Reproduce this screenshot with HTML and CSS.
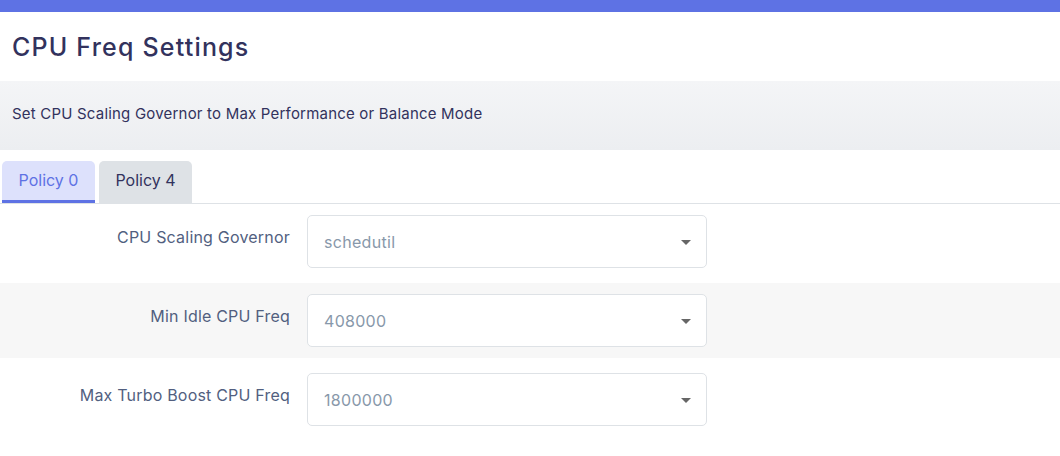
FILE: index.html
```html
<!DOCTYPE html>
<html>
<head>
<meta charset="utf-8">
<link rel="stylesheet" href="styles.css">
</head>
<body>
<div class="topbar"></div>
<header class="header"><h1 class="title">CPU Freq Settings</h1></header>
<div class="desc">Set CPU Scaling Governor to Max Performance or Balance Mode</div>
<nav class="tabs">
  <div class="tab active">Policy 0</div>
  <div class="tab">Policy 4</div>
</nav>
<div class="rows">
  <div class="row">
    <div class="label">CPU Scaling Governor</div>
    <div class="select"><span>schedutil</span><span class="caret"></span></div>
  </div>
  <div class="row alt">
    <div class="label">Min Idle CPU Freq</div>
    <div class="select"><span>408000</span><span class="caret"></span></div>
  </div>
  <div class="row">
    <div class="label">Max Turbo Boost CPU Freq</div>
    <div class="select"><span>1800000</span><span class="caret"></span></div>
  </div>
</div>
</body>
</html>
```
FILE: styles.css
```css
html, body { margin: 0; padding: 0; background: #fff; }
body { font-family: Inter, "Noto Sans", sans-serif; color: #32325d; }
.topbar { height: 12px; background: #5e72e4; }
.header { height: 69px; display: flex; align-items: center; padding-left: 12px; box-sizing: border-box; }
.title { margin: 0; font-size: 25px; font-weight: 500; letter-spacing: 1.2px; color: #32325d; }
.desc { height: 69px; box-sizing: border-box; display: flex; align-items: center; padding: 0 0 4px 12px;
  background: linear-gradient(#f4f5f7, #eceef1); font-size: 15px; letter-spacing: 0.2px; color: #32325d; }
.tabs { display: flex; gap: 4px; margin-top: 11px; padding-left: 2px; border-bottom: 1px solid #dee2e6; }
.tab { width: 93px; height: 42px; box-sizing: border-box; display: flex; align-items: center; justify-content: center;
  padding-bottom: 4px; background: #dee2e6; border-radius: 5px 5px 0 0; font-size: 16px; color: #32325d; }
.tab.active { background: #dde1fc; color: #5e72e4; border-bottom: 3px solid #5e72e4; padding-bottom: 1px; }
.rows { display: flex; flex-direction: column; gap: 4px; }
.row { height: 75px; box-sizing: border-box; padding: 11px 0; display: grid; grid-template-columns: 290px 400px; column-gap: 17px; }
.row.alt { background: #f7f7f7; }
.label { text-align: right; font-size: 16px; letter-spacing: 0.2px; color: #525f7f; padding-top: 12px; }
.select { height: 53px; box-sizing: border-box; border: 1px solid #dee2e6; border-radius: 5px; background: #fff;
  display: flex; align-items: center; justify-content: space-between; padding: 0 15px 0 16px; font-size: 16px; letter-spacing: 0.3px; color: #8898aa; }
.caret { width: 0; height: 0; border-left: 5px solid transparent; border-right: 5px solid transparent; border-top: 5px solid #666; margin-top: 2px; }
```
